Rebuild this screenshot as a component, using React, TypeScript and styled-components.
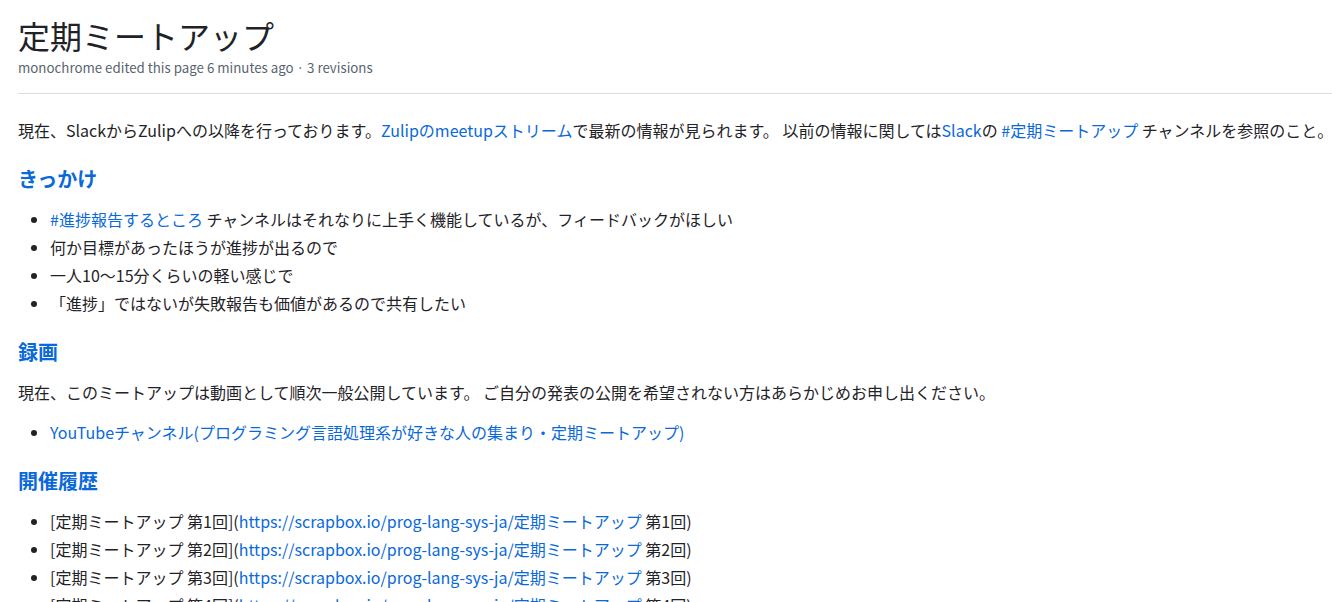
import React from "react";
import styled, { createGlobalStyle } from "styled-components";

const Global = createGlobalStyle`
  html, body { margin: 0; padding: 0; background: #ffffff; }
  body {
    font-family: "Noto Sans CJK JP", "Noto Sans", sans-serif;
    color: #1f2328;
    font-size: 16px;
    line-height: 1.5;
  }
`;

const Page = styled.div`
  padding: 15px 0 0 18px;
  overflow: hidden;
  height: 602px;
  box-sizing: border-box;
`;

const Header = styled.header`
  border-bottom: 1px solid #d8dee4;
  padding-bottom: 15px;
  margin-bottom: 24px;
`;

const Title = styled.h1`
  margin: 0;
  font-size: 32px;
  font-weight: 400;
  line-height: 40px;
  color: #1f2328;
`;

const Meta = styled.div`
  margin-top: 2px;
  font-size: 13.3px;
  line-height: 21px;
  color: #59636e;
`;

const Body = styled.div`
  font-size: 16px;
  line-height: 24px;
`;

const P = styled.p`
  margin: 0 0 16px;
  white-space: nowrap;
`;

const H2 = styled.h2`
  margin: 24px 0 16px;
  font-size: 20px;
  line-height: 25px;
  font-weight: 700;
  color: #0969da;
`;

const List = styled.ul`
  margin: 0 0 16px;
  padding-left: 32px;
  & > li + li { margin-top: 4px; }
`;

const Item = styled.li`
  white-space: nowrap;
`;

const A = styled.a`
  color: #0969da;
  text-decoration: none;
`;

const history = [1, 2, 3, 4, 5];

export default function App() {
  return (
    <>
      <Global />
      <Page>
        <Header>
          <Title>定期ミートアップ</Title>
          <Meta>monochrome edited this page 6 minutes ago · 3 revisions</Meta>
        </Header>
        <Body>
          <P>
            現在、SlackからZulipへの以降を行っております。<A href="#">Zulipのmeetupストリーム</A>で最新の情報が見られます。 以前の情報に関しては<A href="#">Slack</A>の <A href="#">#定期ミートアップ</A> チャンネルを参照のこと。
          </P>
          <H2>きっかけ</H2>
          <List>
            <Item>
              <A href="#">#進捗報告するところ</A> チャンネルはそれなりに上手く機能しているが、フィードバックがほしい
            </Item>
            <Item>何か目標があったほうが進捗が出るので</Item>
            <Item>一人10〜15分くらいの軽い感じで</Item>
            <Item>「進捗」ではないが失敗報告も価値があるので共有したい</Item>
          </List>
          <H2>録画</H2>
          <P>
            現在、このミートアップは動画として順次一般公開しています。 ご自分の発表の公開を希望されない方はあらかじめお申し出ください。
          </P>
          <List>
            <Item>
              <A href="#">YouTubeチャンネル(プログラミング言語処理系が好きな人の集まり・定期ミートアップ)</A>
            </Item>
          </List>
          <H2>開催履歴</H2>
          <List>
            {history.map((n) => (
              <Item key={n}>
                [定期ミートアップ 第{n}回](<A href="#">https://scrapbox.io/prog-lang-sys-ja/定期ミートアップ</A> 第{n}回)
              </Item>
            ))}
          </List>
        </Body>
      </Page>
    </>
  );
}
